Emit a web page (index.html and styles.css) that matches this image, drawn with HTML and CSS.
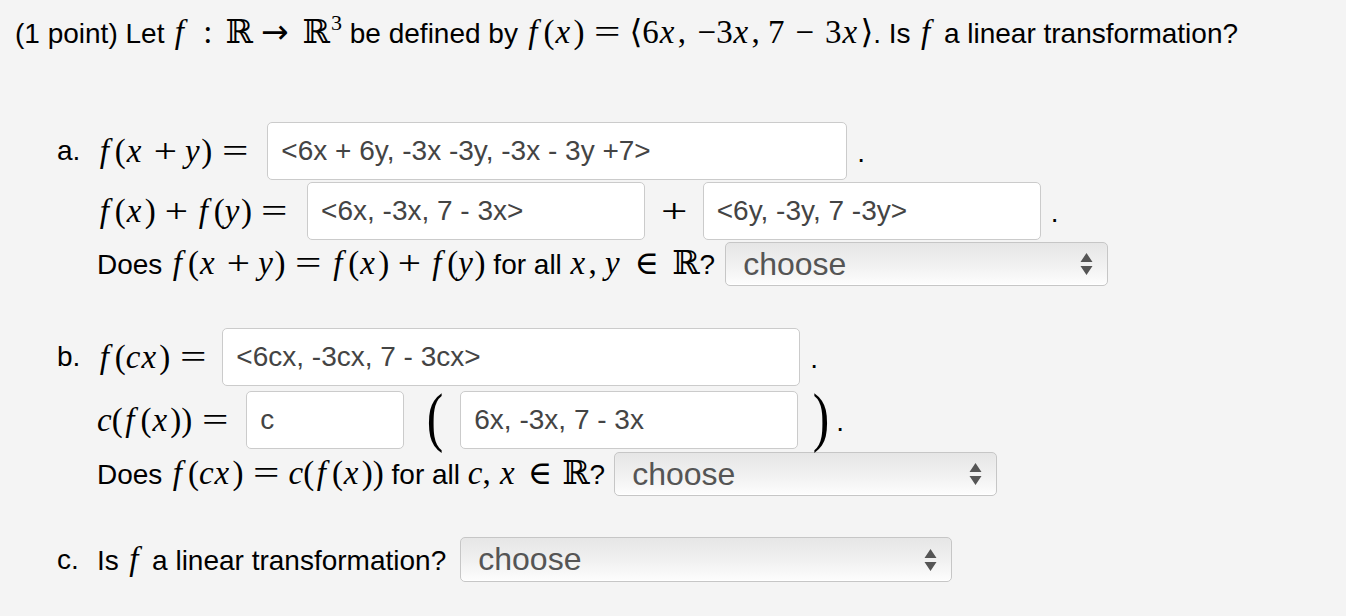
FILE: index.html
```
<!DOCTYPE html>
<html>
<head>
<meta charset="utf-8">
<link rel="stylesheet" href="styles.css">
</head>
<body>
<div class="page">
  <p class="title">(1 point) Let <span class="m"><i class="f">f</i><span class="rel">:</span>ℝ<span class="arrow">→</span>ℝ<sup>3</sup></span> be defined by <span class="m"><i class="f">f</i>(<i>x</i>)<span class="rel wide">=</span>⟨6<i>x</i>, <span class="neg">−</span>3<i>x</i>, 7<span class="bin">−</span>3<i>x</i>⟩</span>. Is <span class="m"><i class="f">f</i></span> a linear transformation?</p>

  <div class="part part-a">
    <div class="label">a.</div>
    <div class="rows">
      <div class="row h58">
        <span class="m eq-a"><i class="f">f</i>(<i>x</i><span class="bin wide">+</span><i class="y">y</i>)<span class="rel wide">=</span></span>
        <input class="inp w580" type="text" value="<6x + 6y, -3x -3y, -3x - 3y +7>" readonly>
        <span class="dot">.</span>
      </div>
      <div class="row h58">
        <span class="m eq-a"><i class="f">f</i>(<i>x</i>)<span class="bin wide">+</span><i class="f">f</i>(<i class="y">y</i>)<span class="rel wide">=</span></span>
        <input class="inp w338" type="text" value="<6x, -3x, 7 - 3x>" readonly>
        <span class="m plus"><span class="wide">+</span></span>
        <input class="inp w338" type="text" value="<6y, -3y, 7 -3y>" readonly>
        <span class="dot">.</span>
      </div>
      <div class="row h44">
        <span class="q">Does <span class="m"><i class="f">f</i>(<i>x</i><span class="bin wide">+</span><i class="y">y</i>)<span class="rel wide">=</span><i class="f">f</i>(<i>x</i>)<span class="bin wide">+</span><i class="f">f</i>(<i class="y">y</i>)</span> for all <span class="m"><i>x</i>, <i class="y">y</i><span class="rel">∈</span>ℝ</span>?</span>
        <div class="sel w383"><span>choose</span><svg class="arr" width="13" height="24" viewBox="0 0 13 24"><path d="M6.5 1 L12.5 10 L0.5 10 Z M6.5 23 L12.5 14 L0.5 14 Z" fill="#555"/></svg></div>
      </div>
    </div>
  </div>

  <div class="part part-b">
    <div class="label">b.</div>
    <div class="rows">
      <div class="row h58">
        <span class="m eq"><i class="f">f</i>(<i class="c">c</i><i>x</i>)<span class="rel wide">=</span></span>
        <input class="inp w578" type="text" value="<6cx, -3cx, 7 - 3cx>" readonly>
        <span class="dot">.</span>
      </div>
      <div class="row h64">
        <span class="m eq eq-b"><i class="c">c</i>(<i class="f">f</i>(<i>x</i>))<span class="rel wide">=</span></span>
        <input class="inp w158" type="text" value="c" readonly>
        <span class="paren paren-l">(</span>
        <input class="inp w338" type="text" value="6x, -3x, 7 - 3x" readonly>
        <span class="paren paren-r">)</span><span class="dot dot-r">.</span>
      </div>
      <div class="row h44">
        <span class="q q-b">Does <span class="m"><i class="f">f</i>(<i class="c">c</i><i>x</i>)<span class="rel wide">=</span><i class="c">c</i>(<i class="f">f</i>(<i>x</i>))</span> for all <span class="m"><i class="c">c</i>, <i>x</i><span class="rel in">∈</span>ℝ</span>?</span>
        <div class="sel w383"><span>choose</span><svg class="arr" width="13" height="24" viewBox="0 0 13 24"><path d="M6.5 1 L12.5 10 L0.5 10 Z M6.5 23 L12.5 14 L0.5 14 Z" fill="#555"/></svg></div>
      </div>
    </div>
  </div>

  <div class="part part-c">
    <div class="label label-c">c.</div>
    <div class="rows">
      <div class="row h45">
        <span class="q q-c">Is <span class="m"><i class="f">f</i></span> a linear transformation?</span>
        <div class="sel w492"><span>choose</span><svg class="arr" width="13" height="24" viewBox="0 0 13 24"><path d="M6.5 1 L12.5 10 L0.5 10 Z M6.5 23 L12.5 14 L0.5 14 Z" fill="#555"/></svg></div>
      </div>
    </div>
  </div>
</div>
</body>
</html>
```

FILE: styles.css
```
html, body {
  margin: 0;
  padding: 0;
  background: #f4f4f4;
}
body {
  font-family: "Liberation Sans", Arial, sans-serif;
  color: #000;
  font-size: 28px;
}
.page {
  padding: 14px 0 0 15px;
}
.title {
  margin: 0;
  height: 40px;
  line-height: 40px;
  font-size: 28px;
  white-space: nowrap;
}
.m {
  font-family: "Liberation Serif", "DejaVu Serif", serif;
  font-size: 33px;
  line-height: 1;
  white-space: nowrap;
}
.m i {
  font-style: italic;
  padding: 0 0.1em 0 0.03em;
}
.m i.f { padding: 0 0.18em 0 0.08em; }
.m i.y { padding: 0 0.05em 0 0; }
.m i.c { padding: 0; }
.bin { margin: 0 0.33em; }
.rel { margin: 0 0.4em; }
.rel.in { margin: 0 0.3em; }
.wide {
  display: inline-block;
  transform: scaleX(1.42);
}
.bin.wide { transform: scaleX(1.25); }
.neg { margin-left: 0.1em; }
.arrow {
  font-family: "DejaVu Sans", sans-serif;
  font-size: 33px;
  margin: 0 14px 0 8px;
}
sup {
  font-size: 22px;
  line-height: 0;
  vertical-align: 13px;
  margin-left: 1px;
}
.part {
  display: flex;
  margin-left: 42px;
}
.part-a { margin-top: 68px; }
.part-b { margin-top: 42px; }
.part-c { margin-top: 41px; }
.label {
  width: 40px;
  line-height: 58px;
  font-size: 28px;
}
.label-c { line-height: 45px; }
.rows {
  display: flex;
  flex-direction: column;
  gap: 2px;
}
.row {
  display: flex;
  align-items: center;
}
.h58 { height: 58px; }
.h64 { height: 64px; }
.h44 { height: 44px; }
.h45 { height: 45px; }
.part-b .rows { gap: 0; }
.part-b .h64 { margin-top: 2px; }
.q {
  font-size: 28px;
  white-space: nowrap;
  margin-right: 10px;
}
.q-b { margin-right: 9px; }
.q-c { margin-right: 14px; }
.eq { margin-right: 7px; }
.eq-a { margin-right: 10px; }
.eq-b { margin-right: 9px; }
.inp {
  box-sizing: border-box;
  height: 58px;
  margin: 0;
  padding: 0 0 0 13px;
  border: 1px solid #cbcbcb;
  border-radius: 5px;
  background: #fff;
  font-family: "Liberation Sans", Arial, sans-serif;
  font-size: 28px;
  color: #444;
  outline: none;
}
.w580 { width: 580px; }
.w578 { width: 578px; }
.w338 { width: 338px; }
.w158 { width: 158px; }
.plus {
  margin: 0 19px 0 20px;
}
.dot {
  font-size: 28px;
  margin-left: 10px;
  padding-top: 4px;
}
.paren {
  font-family: "Liberation Serif", "DejaVu Serif", serif;
  font-size: 66px;
  line-height: 64px;
  margin-top: -6px;
  transform: scaleX(0.75);
}
.paren-l { margin-left: 20px; margin-right: 14px; }
.paren-r { margin-left: 12px; }
.dot-r { margin-left: 4px; }
.sel {
  box-sizing: border-box;
  height: 100%;
  display: flex;
  align-items: center;
  justify-content: space-between;
  padding: 0 14px 0 17px;
  border: 1px solid #c6c6c6;
  border-radius: 5px;
  background: linear-gradient(#e6e6e6 0%, #f0f0f0 50%, #fdfdfd 100%);
  box-shadow: inset 0 -1px 1px #fff;
  font-size: 32px;
  color: #555;
}
.w383 { width: 383px; }
.w492 { width: 492px; }
.arr { display: block; }
```
